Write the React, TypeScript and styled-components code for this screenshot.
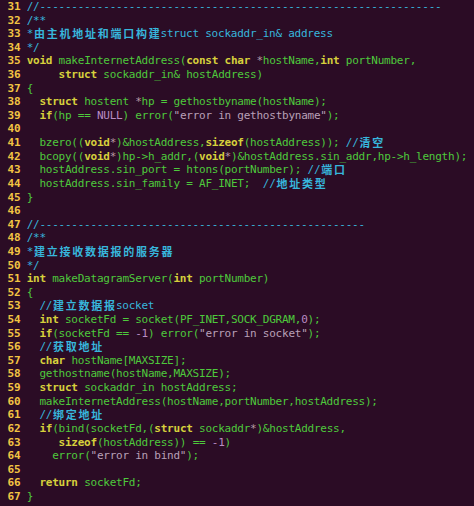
import React from "react";
import styled, { createGlobalStyle } from "styled-components";

const CELL = 6.38;

const Global = createGlobalStyle`
  html, body { margin: 0; padding: 0; background: #2b0c25; }
  #root { min-height: 100vh; background: #2b0c25; }
`;

const Editor = styled.div`
  box-sizing: border-box;
  width: 474px;
  height: 506px;
  overflow: hidden;
  background: #2b0c25;
  padding: 0 0 0 1.2px;
  font-family: "DejaVu Sans Mono", "Noto Sans CJK SC", monospace;
  font-size: 11px;
  letter-spacing: ${CELL - 11 * 0.60205}px;
  line-height: 13.61px;
  color: #4ec93c;
`;

const Row = styled.div`
  display: flex;
  height: 13.61px;
  white-space: pre;
`;

const Num = styled.span`
  width: ${CELL * 3}px;
  margin-right: ${CELL}px;
  text-align: right;
  color: #f2c443;
  font-weight: bold;
  flex: none;
  letter-spacing: ${CELL - 11 * 0.60205}px;
`;

const Code = styled.span`
  white-space: pre;
`;

type Kind = "k" | "c" | "n" | "s" | "o" | "p";

const colors: Record<Kind, string> = {
  k: "#d6d03c",
  c: "#37b6dc",
  n: "#b98cc4",
  s: "#b9a0b8",
  o: "#b89aa4",
  p: "#4ec93c",
};

const Tok = styled.span<{ $kind: Kind }>`
  color: ${(p) => colors[p.$kind]};
  font-weight: ${(p) => (p.$kind === "k" ? "bold" : "normal")};
`;

const Wide = styled.span`
  display: inline-block;
  width: ${CELL * 2}px;
  letter-spacing: 0;
  text-align: center;
  font-family: "Noto Sans CJK SC", sans-serif;
  font-weight: bold;
  font-size: 11px;
  line-height: 13.61px;
  vertical-align: top;
`;

const lines: { n: number; t: string; c?: boolean }[] = [
  { n: 31, t: "//" + "-".repeat(63) },
  { n: 32, t: "/**", c: true },
  { n: 33, t: "*由主机地址和端口构建struct sockaddr_in& address", c: true },
  { n: 34, t: "*/", c: true },
  { n: 35, t: "void makeInternetAddress(const char *hostName,int portNumber," },
  { n: 36, t: "     struct sockaddr_in& hostAddress)" },
  { n: 37, t: "{" },
  { n: 38, t: "  struct hostent *hp = gethostbyname(hostName);" },
  { n: 39, t: '  if(hp == NULL) error("error in gethostbyname");' },
  { n: 40, t: "" },
  { n: 41, t: "  bzero((void*)&hostAddress,sizeof(hostAddress)); //清空" },
  { n: 42, t: "  bcopy((void*)hp->h_addr,(void*)&hostAddress.sin_addr,hp->h_length);" },
  { n: 43, t: "  hostAddress.sin_port = htons(portNumber); //端口" },
  { n: 44, t: "  hostAddress.sin_family = AF_INET;  //地址类型" },
  { n: 45, t: "}" },
  { n: 46, t: "" },
  { n: 47, t: "//" + "-".repeat(51) },
  { n: 48, t: "/**", c: true },
  { n: 49, t: "*建立接收数据报的服务器", c: true },
  { n: 50, t: "*/", c: true },
  { n: 51, t: "int makeDatagramServer(int portNumber)" },
  { n: 52, t: "{" },
  { n: 53, t: "  //建立数据报socket" },
  { n: 54, t: "  int socketFd = socket(PF_INET,SOCK_DGRAM,0);" },
  { n: 55, t: '  if(socketFd == -1) error("error in socket");' },
  { n: 56, t: "  //获取地址" },
  { n: 57, t: "  char hostName[MAXSIZE];" },
  { n: 58, t: "  gethostname(hostName,MAXSIZE);" },
  { n: 59, t: "  struct sockaddr_in hostAddress;" },
  { n: 60, t: "  makeInternetAddress(hostName,portNumber,hostAddress);" },
  { n: 61, t: "  //绑定地址" },
  { n: 62, t: "  if(bind(socketFd,(struct sockaddr*)&hostAddress," },
  { n: 63, t: "     sizeof(hostAddress)) == -1)" },
  { n: 64, t: '    error("error in bind");' },
  { n: 65, t: "" },
  { n: 66, t: "  return socketFd;" },
  { n: 67, t: "}" },
];

const keywords = new Set(["void", "const", "char", "int", "struct", "if", "sizeof", "return"]);

function renderText(text: string, kind: Kind, key: string) {
  const parts: React.ReactNode[] = [];
  let buf = "";
  let i = 0;
  for (const ch of text) {
    if (/[\u4e00-\u9fff]/.test(ch)) {
      if (buf) parts.push(buf);
      buf = "";
      parts.push(<Wide key={key + "w" + i}>{ch}</Wide>);
    } else buf += ch;
    i++;
  }
  if (buf) parts.push(buf);
  return (
    <Tok key={key} $kind={kind}>
      {parts}
    </Tok>
  );
}

function tokenize(t: string, comment?: boolean) {
  if (comment) return [renderText(t, "c", "c")];
  const out: React.ReactNode[] = [];
  let code = t;
  let rest = "";
  const ci = t.indexOf("//");
  if (ci >= 0) {
    code = t.slice(0, ci);
    rest = t.slice(ci);
  }
  const re = /("[^"]*")|([A-Za-z_]\w*)|(-?\d+)|(\*)|(\s+|.)/g;
  let m: RegExpExecArray | null;
  let idx = 0;
  while ((m = re.exec(code))) {
    let kind: Kind = "p";
    if (m[1]) kind = "s";
    else if (m[2]) kind = keywords.has(m[2]) ? "k" : m[2] === "NULL" ? "n" : "p";
    else if (m[3]) kind = "n";
    else if (m[4]) kind = "o";
    out.push(renderText(m[0], kind, "t" + idx++));
  }
  if (rest) out.push(renderText(rest, "c", "rc"));
  return out;
}

export default function App() {
  return (
    <>
      <Global />
      <Editor>
        {lines.map((l) => (
          <Row key={l.n}>
            <Num>{l.n}</Num>
            <Code>{tokenize(l.t, l.c)}</Code>
          </Row>
        ))}
      </Editor>
    </>
  );
}
